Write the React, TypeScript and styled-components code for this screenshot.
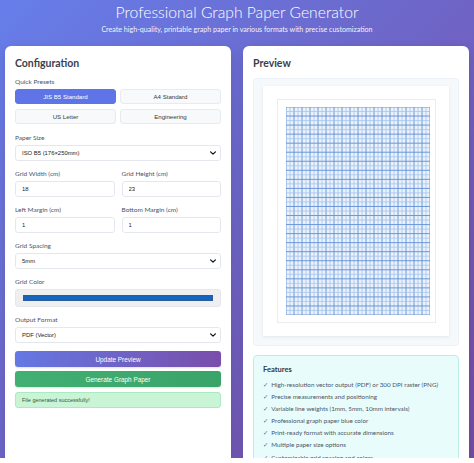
import React from 'react';
import styled, { createGlobalStyle } from 'styled-components';

const GlobalStyle = createGlobalStyle`
  html, body {
    margin: 0;
    padding: 0;
    background: #ffffff;
    font-family: 'Lato', 'Open Sans', 'DejaVu Sans', sans-serif;
  }
  * {
    box-sizing: border-box;
  }
`

const presets = ['JIS B5 Standard', 'A4 Standard', 'US Letter', 'Engineering'];

const features = [
  'High-resolution vector output (PDF) or 300 DPI raster (PNG)',
  'Precise measurements and positioning',
  'Variable line weights (1mm, 5mm, 10mm intervals)',
  'Professional graph paper blue color',
  'Print-ready format with accurate dimensions',
  'Multiple paper size options',
  'Customizable grid spacing and colors',
];

function Chevron() {
  return (
    <ChevronIcon viewBox="0 0 10 6" width="6" height="4">
      <path d="M1 1 L5 5 L9 1" fill="none" stroke="#111" strokeWidth="2" strokeLinecap="round" strokeLinejoin="round" />
    </ChevronIcon>
  )
}

function SelectField({ value }: { value: string }) {
  return (
    <SelectWrap>
      <SelectBox defaultValue={value}>
        <option>{value}</option>
      </SelectBox>
      <Chevron />
    </SelectWrap>
  )
}

// 180 x 230 mm grid, 5mm light lines, 10mm darker lines
function GridDrawing() {
  const cols = Array.from({ length: 37 }, (_, i) => i * 5);
  const rows = Array.from({ length: 47 }, (_, i) => i * 5);
  return (
    <GridSvg viewBox="0 0 180 230" preserveAspectRatio="none">
      <rect x="0" y="0" width="180" height="230" fill="#eaf2fc" />
      {cols.map((x) => (
        <line key={'v' + x} x1={x} y1={0} x2={x} y2={230}
          stroke={x % 10 === 0 ? '#5f8fd2' : '#9fc0ea'}
          strokeWidth={x % 10 === 0 ? 0.9 : 0.7}
          vectorEffect="non-scaling-stroke" />
      ))}
      {rows.map((y) => (
        <line key={'h' + y} x1={0} y1={y} x2={180} y2={y}
          stroke={y % 10 === 0 ? '#5f8fd2' : '#9fc0ea'}
          strokeWidth={y % 10 === 0 ? 0.9 : 0.7}
          vectorEffect="non-scaling-stroke" />
      ))}
    </GridSvg>
  )
}

export default function App() {
  return (
    <>
      <GlobalStyle />
      <Page>
        <Header>
          <Title>Professional Graph Paper Generator</Title>
          <Subtitle>Create high-quality, printable graph paper in various formats with precise customization</Subtitle>
        </Header>
        <Columns>
          <Card>
            <CardTitle>Configuration</CardTitle>

            <FormGroup $gap={10}>
              <Label>Quick Presets</Label>
              <PresetGrid>
                {presets.map((p, i) => (
                  <PresetButton key={p} $active={i === 0}>{p}</PresetButton>
                ))}
              </PresetGrid>
            </FormGroup>

            <FormGroup>
              <Label>Paper Size</Label>
              <SelectField value="ISO B5 (176×250mm)" />
            </FormGroup>

            <FieldRow>
              <FormGroup>
                <Label>Grid Width (cm)</Label>
                <TextInput defaultValue="18" />
              </FormGroup>
              <FormGroup>
                <Label>Grid Height (cm)</Label>
                <TextInput defaultValue="23" />
              </FormGroup>
            </FieldRow>

            <FieldRow>
              <FormGroup>
                <Label>Left Margin (cm)</Label>
                <TextInput defaultValue="1" />
              </FormGroup>
              <FormGroup>
                <Label>Bottom Margin (cm)</Label>
                <TextInput defaultValue="1" />
              </FormGroup>
            </FieldRow>

            <FormGroup>
              <Label>Grid Spacing</Label>
              <SelectField value="5mm" />
            </FormGroup>

            <FormGroup>
              <Label>Grid Color</Label>
              <ColorField>
                <Swatch />
              </ColorField>
            </FormGroup>

            <FormGroup $gap={8}>
              <Label>Output Format</Label>
              <SelectField value="PDF (Vector)" />
            </FormGroup>

            <ActionButton $variant="primary">Update Preview</ActionButton>
            <ActionButton $variant="success">Generate Graph Paper</ActionButton>

            <SuccessBox>File generated successfully!</SuccessBox>
          </Card>

          <Card>
            <CardTitle>Preview</CardTitle>
            <PreviewArea>
              <Sheet>
                <MarginFrame>
                  <GridDrawing />
                </MarginFrame>
              </Sheet>
            </PreviewArea>
            <FeatureBox>
              <FeatureTitle>Features</FeatureTitle>
              <FeatureList>
                {features.map((f) => (
                  <FeatureItem key={f}><Check>✓</Check>{f}</FeatureItem>
                ))}
              </FeatureList>
            </FeatureBox>
          </Card>
        </Columns>
      </Page>
    </>
  )
}

const Page = styled.div`
  height: 458px;
  overflow: hidden;
  padding: 0 5px;
  background: linear-gradient(135deg, #667eea 0%, #764ba2 100%);
`

const Header = styled.header`
  height: 46px;
  padding-top: 3px;
  text-align: center;
  color: #ffffff;
`

const Title = styled.h1`
  margin: 0;
  font-size: 15.7px;
  line-height: 19px;
  font-weight: 300;
`

const Subtitle = styled.p`
  margin: 3px 0 0;
  font-size: 7.1px;
  line-height: 9px;
  opacity: 0.92;
`

const Columns = styled.div`
  display: grid;
  grid-template-columns: 1fr 1fr;
  gap: 12px;
`

const Card = styled.section`
  background: #ffffff;
  border-radius: 6px;
  padding: 10px;
  min-height: 440px;
  box-shadow: 0 4px 12px rgba(0, 0, 0, 0.12);
`

const CardTitle = styled.h2`
  margin: 0 0 8px;
  font-size: 10.5px;
  line-height: 14px;
  font-weight: 700;
  color: #3a3f4b;
`

const FormGroup = styled.div<{ $gap?: number }>`
  display: flex;
  flex-direction: column;
  gap: 3px;
  margin-bottom: ${props => props.$gap ?? 9}px;
`

const Label = styled.label`
  font-size: 6.5px;
  line-height: 8px;
  color: #4a5568;
`

const PresetGrid = styled.div`
  display: grid;
  grid-template-columns: 1fr 1fr;
  gap: 5px 4px;
`

const PresetButton = styled.button<{ $active?: boolean }>`
  height: 15px;
  padding: 0;
  border-radius: 3px;
  border: 1px solid ${props => props.$active ? '#5f74e6' : '#e6ebf1'};
  background: ${props => props.$active ? '#5f74e6' : '#f7f9fb'};
  color: ${props => props.$active ? '#ffffff' : '#333a44'};
  font-family: 'Liberation Sans', Arial, sans-serif;
  font-size: 6.1px;
`

const FieldRow = styled.div`
  display: grid;
  grid-template-columns: 1fr 1fr;
  gap: 7px;
`

const TextInput = styled.input`
  display: block;
  width: 100%;
  height: 16px;
  padding: 0 6px;
  border: 1px solid #e4e8ee;
  border-radius: 3px;
  background: #ffffff;
  font-family: 'Liberation Sans', Arial, sans-serif;
  font-size: 5.9px;
  color: #222;
  outline: none;
`

const SelectWrap = styled.div`
  position: relative;
  height: 16px;
`

const SelectBox = styled.select`
  display: block;
  appearance: none;
  width: 100%;
  height: 16px;
  padding: 0 6px;
  border: 1px solid #e4e8ee;
  border-radius: 3px;
  background: #ffffff;
  font-family: 'Liberation Sans', Arial, sans-serif;
  font-size: 5.9px;
  color: #222;
  outline: none;
`

const ChevronIcon = styled.svg`
  position: absolute;
  right: 5px;
  top: 6px;
  pointer-events: none;
`

const ColorField = styled.div`
  height: 18px;
  padding: 5px 7px;
  border: 1px solid #e4e8ee;
  border-radius: 3px;
  background: #efefef;
`

const Swatch = styled.div`
  height: 6px;
  background: #1565c0;
  border: 1px solid #2a5d9a;
`

const ActionButton = styled.button<{ $variant: 'primary' | 'success' }>`
  display: block;
  width: 100%;
  height: 16px;
  margin-bottom: 4px;
  padding: 0;
  border: none;
  border-radius: 3px;
  background: ${props => props.$variant === 'primary'
    ? 'linear-gradient(90deg, #6478e3 0%, #7a4eaa 100%)'
    : 'linear-gradient(90deg, #42b072 0%, #3aa468 100%)'};
  color: #ffffff;
  font-family: 'Liberation Sans', Arial, sans-serif;
  font-size: 6.4px;
  box-shadow: 0 1px 2px rgba(0, 0, 0, 0.12);
`

const SuccessBox = styled.div`
  margin-top: 5px;
  height: 16px;
  padding: 0 6px;
  display: flex;
  align-items: center;
  border: 1px solid #abeac0;
  border-radius: 3px;
  background: #c9f5d6;
  color: #2f5a3e;
  font-family: 'Liberation Sans', Arial, sans-serif;
  font-size: 5.5px;
`

const PreviewArea = styled.div`
  height: 268px;
  padding: 7px 9px 9px;
  border: 1px solid #edf2f8;
  border-radius: 4px;
  background: #f6f9fc;
`

const Sheet = styled.div`
  height: 100%;
  padding: 13px 13px 13px 14px;
  background: #ffffff;
  box-shadow: 0 1px 3px rgba(0, 0, 0, 0.08);
`

const MarginFrame = styled.div`
  height: 100%;
  padding: 7px 5px 7px 8px;
  border: 1px solid #ececec;
`

const GridSvg = styled.svg`
  display: block;
  width: 100%;
  height: 100%;
`

const FeatureBox = styled.div`
  margin-top: 9px;
  padding: 9px 9px;
  border: 1px solid #bdeee6;
  border-radius: 4px;
  background: #e8fdfb;
`

const FeatureTitle = styled.h3`
  margin: 0 0 4px;
  font-size: 7.5px;
  line-height: 10px;
  font-weight: 700;
  color: #2d3748;
`

const FeatureList = styled.ul`
  margin: 0;
  padding: 0;
  list-style: none;
`

const FeatureItem = styled.li`
  font-size: 6.3px;
  line-height: 12.1px;
  color: #4a5568;
`

const Check = styled.span`
  margin-right: 3px;
  color: #5a6b7a;
  font-family: 'DejaVu Sans', sans-serif;
`
